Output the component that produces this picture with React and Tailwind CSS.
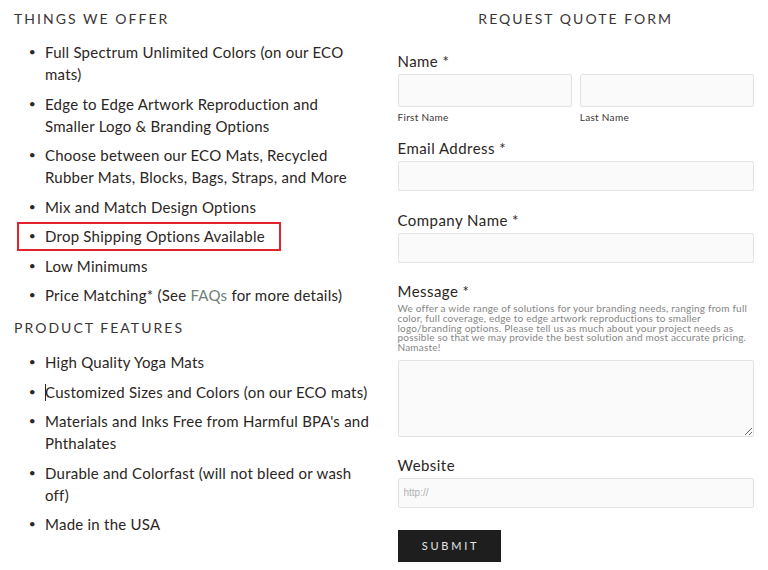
const offers = [
	"Full Spectrum Unlimited Colors (on our ECO mats)",
	"Edge to Edge Artwork Reproduction and Smaller Logo & Branding Options",
	"Choose between our ECO Mats, Recycled Rubber Mats, Blocks, Bags, Straps, and More",
	"Mix and Match Design Options",
	"Drop Shipping Options Available",
	"Low Minimums",
	"price"
];

const features = [
	"High Quality Yoga Mats",
	"Customized Sizes and Colors (on our ECO mats)",
	"Materials and Inks Free from Harmful BPA's and Phthalates",
	"Durable and Colorfast (will not bleed or wash off)",
	"Made in the USA"
];

const font = { fontFamily: "Lato, 'Noto Sans', sans-serif" };

const Heading = ({ children, className = "" }) => (
	<h2 className={`text-[14px] leading-[20px] tracking-[0.145em] text-[#3b3536] ${className}`}>
		{children}
	</h2>
);

const Bullet = ({ children, highlight, caret }) => (
	<li className="relative flex mb-[7.5px]">
		<span className="w-[31px] shrink-0 text-right pr-[9px] text-[12px]">•</span>
		<span className="relative">
			{caret && <span className="absolute left-0 top-[3px] w-px h-[17px] bg-[#2b2523]" />}
			{children}
		</span>
		{highlight && (
			<div className="absolute left-[3px] -top-[3px] w-[264px] h-[29px] border-2 border-[#e3222c] pointer-events-none" />
		)}
	</li>
);

const Field = ({ label, children, className = "" }) => (
	<div className={className}>
		<label className="block text-[15px] leading-[20px] tracking-[0.03em] text-[#2b2523] mb-[3px]">{label}</label>
		{children}
	</div>
);

const inputClass = "block w-full h-[30px] bg-[#fafafa] border border-[#e3e3e3] rounded-[2px]";

const App = () => (
	<div className="w-[768px] h-[570px] overflow-hidden bg-white grid grid-cols-2 gap-[27px] px-[14px] pt-[9px] text-[#2b2523]" style={font}>
		<div>
			<Heading>THINGS WE OFFER</Heading>
			<ul className="mt-[12px] text-[15px] leading-[22px] tracking-[0.016em]">
				{offers.map((item) =>
					item === "price" ? (
						<Bullet key={item}>
							Price Matching* (See <span className="text-[#6e7f78]">FAQs</span> for more details)
						</Bullet>
					) : (
						<Bullet key={item} highlight={item.startsWith("Drop")}>{item}</Bullet>
					)
				)}
			</ul>
			<Heading className="mt-[12px]">PRODUCT FEATURES</Heading>
			<ul className="mt-[13px] text-[15px] leading-[22px] tracking-[0.016em]">
				{features.map((item) => (
					<Bullet key={item} caret={item.startsWith("Customized")}>{item}</Bullet>
				))}
			</ul>
		</div>
		<div>
			<Heading className="text-center">REQUEST QUOTE FORM</Heading>
			<Field label="Name *" className="mt-[22px]">
				<div className="grid grid-cols-2 gap-[8px]">
					<div>
						<input className={`${inputClass} h-[33px]`} />
						<div className="text-[10px] leading-[14px] mt-[3px] tracking-[0.03em] text-[#3b3536]">First Name</div>
					</div>
					<div>
						<input className={`${inputClass} h-[33px]`} />
						<div className="text-[10px] leading-[14px] mt-[3px] tracking-[0.03em] text-[#3b3536]">Last Name</div>
					</div>
				</div>
			</Field>
			<Field label="Email Address *" className="mt-[14px]">
				<input className={inputClass} />
			</Field>
			<Field label="Company Name *" className="mt-[19px]">
				<input className={inputClass} />
			</Field>
			<Field label="Message *" className="mt-[18px]">
				<p className="text-[10px] leading-[9.75px] tracking-[0.02em] text-[#858585]">
					We offer a wide range of solutions for your branding needs, ranging from full color, full coverage, edge to edge artwork reproductions to smaller logo/branding options. Please tell us as much about your project needs as possible so that we may provide the best solution and most accurate pricing. Namaste!
				</p>
				<textarea className="block w-full h-[77px] mt-[7px] bg-[#fafafa] border border-[#e3e3e3] rounded-[2px] resize-y" />
			</Field>
			<Field label="Website" className="mt-[18px]">
				<input
					className={`${inputClass} px-[5px] text-[10px] placeholder:text-[#b0b0b0]`}
					style={{ fontFamily: "'Liberation Sans', Arial, sans-serif" }}
					placeholder="http://"
				/>
			</Field>
			<button className="mt-[22px] w-[103px] h-[32px] bg-[#1e1e1e] text-[#e6e6e6] text-[11px] tracking-[0.25em] pl-[3px]">
				SUBMIT
			</button>
		</div>
	</div>
);

export default App;
